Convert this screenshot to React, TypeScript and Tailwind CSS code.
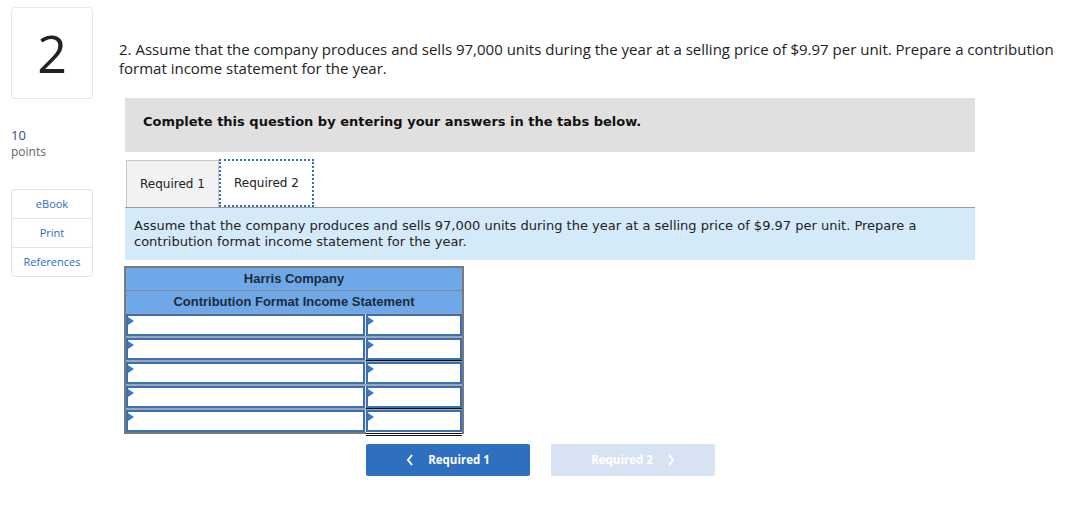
import React from "react";

// Question card: left meta column + question body with tabs and a fill-in table.

const rows = [
  { under: "none" },
  { under: "single" },
  { under: "none" },
  { under: "single" },
  { under: "double" },
] as const;

function Marker() {
  return (
    <span className="absolute left-0 top-[1px] h-0 w-0 border-y-[4px] border-l-[6px] border-y-transparent border-l-[#3a78c9]" />
  );
}

function Cell({ wide, under }: { wide?: boolean; under?: string }) {
  let extra = "";
  if (under === "single") extra = "shadow-[0_1px_0_#111]";
  if (under === "double") extra = "shadow-[0_1px_0_#fff,0_2px_0_#111,0_3px_0_#fff,0_4px_0_#111]";
  return (
    <div
      className={`relative h-[22px] border-2 border-[#3b6fb3] bg-white ${wide ? "w-[240px]" : "w-[97px]"} ${!wide ? extra : ""}`}
    >
      <Marker />
    </div>
  );
}

export default function App() {
  return (
    <div className="flex h-[530px] w-[1066px] bg-white pt-[7px] font-['Open_Sans',sans-serif]">
      {/* left meta column */}
      <div className="ml-[11px] flex w-[82px] flex-col">
        <div className="flex h-[92px] items-center justify-center rounded-[4px] border border-[#e6e6e6] text-[52px] leading-none text-[#222]">
          2
        </div>
        <div className="mt-[28px] text-[13px] leading-[17px] text-[#1f4f8f]">10</div>
        <div className="text-[12px] leading-[15px] text-[#666]">points</div>
        <div className="mt-[30px] flex flex-col rounded-[4px] border border-[#e3e3e3] text-[11px] text-[#2d6cc0]">
          <div className="flex h-[29px] items-center justify-center border-b border-[#e3e3e3]">eBook</div>
          <div className="flex h-[29px] items-center justify-center border-b border-[#e3e3e3]">Print</div>
          <div className="flex h-[28px] items-center justify-center">References</div>
        </div>
      </div>

      {/* main column */}
      <div className="ml-[26px] flex flex-1 flex-col">
        <p className="mt-[33px] w-[945px] text-[15px] leading-[19px] text-[#222]">
          2. Assume that the company produces and sells 97,000 units during the year at a selling price of $9.97 per unit. Prepare a contribution format income statement for the year.
        </p>

        <div className="ml-[6px] mt-[20px] w-[850px]">
          <div className="flex h-[54px] items-start bg-[#e0e0e0] pl-[18px] pt-[14px] font-['DejaVu_Sans',sans-serif] text-[13px] font-bold text-[#111]">
            Complete this question by entering your answers in the tabs below.
          </div>

          <div className="mt-[8px] flex h-[47px] items-end font-['DejaVu_Sans',sans-serif] text-[12px] text-[#222]">
            <div className="ml-[1px] flex h-[47px] w-[93px] items-center justify-center border border-b-0 border-[#c8c8c8] bg-[#f2f2f2]">
              Required 1
            </div>
            <div className="flex h-[48px] w-[95px] items-center justify-center border-2 border-dotted border-[#2f6cc0] bg-white">
              Required 2
            </div>
          </div>

          <div className="border-t border-[#9a9a9a] bg-[#d5eaf9] px-[9px] pb-[10px] pt-[10px] font-['DejaVu_Sans',sans-serif] text-[13px] leading-[16px] text-[#222]">
            Assume that the company produces and sells 97,000 units during the year at a selling price of $9.97 per unit. Prepare a contribution format income statement for the year.
          </div>

          <div className="mt-[6px] ml-[-1px] w-[340px] border-2 border-[#7a7a7a] bg-[#7a7a7a] font-['Liberation_Sans',sans-serif]">
            <div className="flex h-[23px] items-center justify-center border-b border-[#888] bg-[#6fa8e8] text-[13px] font-bold text-[#1d2a3a]">
              Harris Company
            </div>
            <div className="flex h-[22px] items-center justify-center bg-[#6fa8e8] text-[13px] font-bold text-[#1d2a3a]">
              Contribution Format Income Statement
            </div>
            <div className="flex flex-col gap-[2px] bg-[#9aa6b4] pt-[1px]">
              {rows.map((r, i) => (
                <div key={i} className="flex gap-[1px] bg-[#e9ecf0]">
                  <Cell wide />
                  <Cell under={r.under} />
                </div>
              ))}
            </div>
          </div>

          <div className="mt-[10px] flex gap-[21px] pl-[241px] font-['Open_Sans',sans-serif] text-[11.5px] font-bold text-white">
            <div className="flex h-[32px] w-[164px] items-center justify-center gap-[14px] rounded-[2px] bg-[#2f6fbf]">
              <svg width="8" height="12" viewBox="0 0 8 12" fill="none" stroke="white" strokeWidth="2">
                <path d="M6 1 L2 6 L6 11" />
              </svg>
              Required 1
            </div>
            <div className="flex h-[32px] w-[164px] items-center justify-center gap-[14px] rounded-[2px] bg-[#d7e3f3]">
              Required 2
              <svg width="8" height="12" viewBox="0 0 8 12" fill="none" stroke="white" strokeWidth="2">
                <path d="M2 1 L6 6 L2 11" />
              </svg>
            </div>
          </div>
        </div>
      </div>
    </div>
  );
}
